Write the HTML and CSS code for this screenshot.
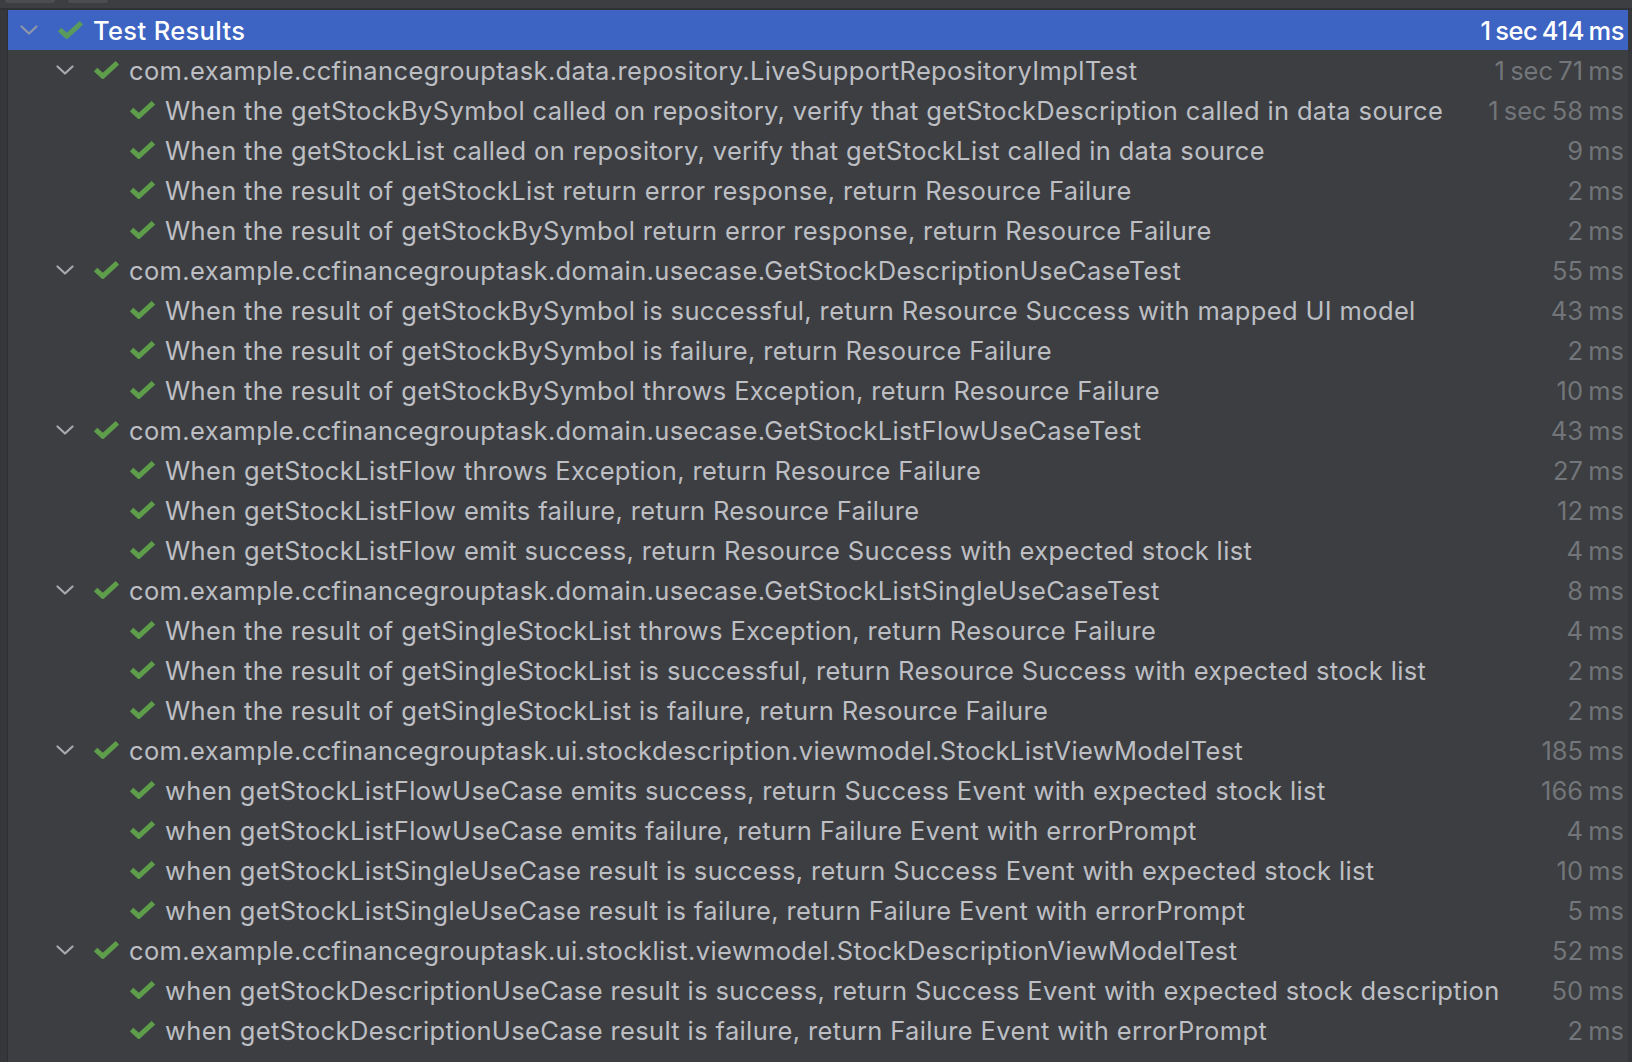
FILE: index.html
```html
<!DOCTYPE html>
<html>
<head>
<meta charset="utf-8">
<link rel="stylesheet" href="styles.css">
</head>
<body>
<svg width="0" height="0" class="defs">
  <defs>
    <symbol id="chev" viewBox="0 0 18 10"><polyline points="1.5,1.5 9,8.5 16.5,1.5" fill="none" stroke="currentColor" stroke-width="2.2" stroke-linecap="round" stroke-linejoin="round"/></symbol>
    <symbol id="ok" viewBox="0 0 25 18"><polyline points="1.6,8.6 8.8,15.2 23.4,1.8" fill="none" stroke="currentColor" stroke-width="5" stroke-linejoin="miter" stroke-linecap="butt"/></symbol>
  </defs>
</svg>
<div class="window">
  <div class="topbar"><span class="tab t1"></span><span class="tab t2"></span></div>
  <div class="main">
    <div class="gutter"></div>
    <div class="tree">
      <div class="row sel l0"><svg class="chev"><use href="#chev"/></svg><svg class="ok"><use href="#ok"/></svg><span class="name">Test Results</span><span class="time">1 sec 414 ms</span></div>

      <div class="row l1"><svg class="chev"><use href="#chev"/></svg><svg class="ok"><use href="#ok"/></svg><span class="name">com.example.ccfinancegrouptask.data.repository.LiveSupportRepositoryImplTest</span><span class="time">1 sec 71 ms</span></div>
      <div class="row l2"><span class="chev"></span><svg class="ok"><use href="#ok"/></svg><span class="name">When the getStockBySymbol called on repository, verify that getStockDescription called in data source</span><span class="time">1 sec 58 ms</span></div>
      <div class="row l2"><span class="chev"></span><svg class="ok"><use href="#ok"/></svg><span class="name">When the getStockList called on repository, verify that getStockList called in data source</span><span class="time">9 ms</span></div>
      <div class="row l2"><span class="chev"></span><svg class="ok"><use href="#ok"/></svg><span class="name">When the result of getStockList return error response, return Resource Failure</span><span class="time">2 ms</span></div>
      <div class="row l2"><span class="chev"></span><svg class="ok"><use href="#ok"/></svg><span class="name">When the result of getStockBySymbol return error response, return Resource Failure</span><span class="time">2 ms</span></div>

      <div class="row l1"><svg class="chev"><use href="#chev"/></svg><svg class="ok"><use href="#ok"/></svg><span class="name">com.example.ccfinancegrouptask.domain.usecase.GetStockDescriptionUseCaseTest</span><span class="time">55 ms</span></div>
      <div class="row l2"><span class="chev"></span><svg class="ok"><use href="#ok"/></svg><span class="name">When the result of getStockBySymbol is successful, return Resource Success with mapped UI model</span><span class="time">43 ms</span></div>
      <div class="row l2"><span class="chev"></span><svg class="ok"><use href="#ok"/></svg><span class="name">When the result of getStockBySymbol is failure, return Resource Failure</span><span class="time">2 ms</span></div>
      <div class="row l2"><span class="chev"></span><svg class="ok"><use href="#ok"/></svg><span class="name">When the result of getStockBySymbol throws Exception, return Resource Failure</span><span class="time">10 ms</span></div>

      <div class="row l1"><svg class="chev"><use href="#chev"/></svg><svg class="ok"><use href="#ok"/></svg><span class="name">com.example.ccfinancegrouptask.domain.usecase.GetStockListFlowUseCaseTest</span><span class="time">43 ms</span></div>
      <div class="row l2"><span class="chev"></span><svg class="ok"><use href="#ok"/></svg><span class="name">When getStockListFlow throws Exception, return Resource Failure</span><span class="time">27 ms</span></div>
      <div class="row l2"><span class="chev"></span><svg class="ok"><use href="#ok"/></svg><span class="name">When getStockListFlow emits failure, return Resource Failure</span><span class="time">12 ms</span></div>
      <div class="row l2"><span class="chev"></span><svg class="ok"><use href="#ok"/></svg><span class="name">When getStockListFlow emit success, return Resource Success with expected stock list</span><span class="time">4 ms</span></div>

      <div class="row l1"><svg class="chev"><use href="#chev"/></svg><svg class="ok"><use href="#ok"/></svg><span class="name">com.example.ccfinancegrouptask.domain.usecase.GetStockListSingleUseCaseTest</span><span class="time">8 ms</span></div>
      <div class="row l2"><span class="chev"></span><svg class="ok"><use href="#ok"/></svg><span class="name">When the result of getSingleStockList throws Exception, return Resource Failure</span><span class="time">4 ms</span></div>
      <div class="row l2"><span class="chev"></span><svg class="ok"><use href="#ok"/></svg><span class="name">When the result of getSingleStockList is successful, return Resource Success with expected stock list</span><span class="time">2 ms</span></div>
      <div class="row l2"><span class="chev"></span><svg class="ok"><use href="#ok"/></svg><span class="name">When the result of getSingleStockList is failure, return Resource Failure</span><span class="time">2 ms</span></div>

      <div class="row l1"><svg class="chev"><use href="#chev"/></svg><svg class="ok"><use href="#ok"/></svg><span class="name">com.example.ccfinancegrouptask.ui.stockdescription.viewmodel.StockListViewModelTest</span><span class="time">185 ms</span></div>
      <div class="row l2"><span class="chev"></span><svg class="ok"><use href="#ok"/></svg><span class="name">when getStockListFlowUseCase emits success, return Success Event with expected stock list</span><span class="time">166 ms</span></div>
      <div class="row l2"><span class="chev"></span><svg class="ok"><use href="#ok"/></svg><span class="name">when getStockListFlowUseCase emits failure, return Failure Event with errorPrompt</span><span class="time">4 ms</span></div>
      <div class="row l2"><span class="chev"></span><svg class="ok"><use href="#ok"/></svg><span class="name">when getStockListSingleUseCase result is success, return Success Event with expected stock list</span><span class="time">10 ms</span></div>
      <div class="row l2"><span class="chev"></span><svg class="ok"><use href="#ok"/></svg><span class="name">when getStockListSingleUseCase result is failure, return Failure Event with errorPrompt</span><span class="time">5 ms</span></div>

      <div class="row l1"><svg class="chev"><use href="#chev"/></svg><svg class="ok"><use href="#ok"/></svg><span class="name">com.example.ccfinancegrouptask.ui.stocklist.viewmodel.StockDescriptionViewModelTest</span><span class="time">52 ms</span></div>
      <div class="row l2"><span class="chev"></span><svg class="ok"><use href="#ok"/></svg><span class="name">when getStockDescriptionUseCase result is success, return Success Event with expected stock description</span><span class="time">50 ms</span></div>
      <div class="row l2"><span class="chev"></span><svg class="ok"><use href="#ok"/></svg><span class="name">when getStockDescriptionUseCase result is failure, return Failure Event with errorPrompt</span><span class="time">2 ms</span></div>
    </div>
    <div class="rgutter"></div>
  </div>
</div>
</body>
</html>
```

FILE: styles.css
```css
html, body {
  margin: 0;
  padding: 0;
  background: #3c3e41;
}
.defs {
  position: absolute;
  width: 0;
  height: 0;
}
.window {
  width: 1632px;
  height: 1062px;
  display: flex;
  flex-direction: column;
  overflow: hidden;
  font-family: Inter, "Noto Sans", "Liberation Sans", sans-serif;
}
.topbar {
  height: 8px;
  flex: none;
  background: #3c3e41;
  border-bottom: 2px solid #2f3134;
  display: flex;
  align-items: flex-start;
  padding-left: 5px;
  gap: 13px;
}
.tab {
  display: block;
  height: 3px;
  background: #4b4d51;
  border-radius: 0 0 4px 4px;
}
.t1 { width: 50px; }
.t2 { width: 40px; }
.main {
  flex: 1;
  display: flex;
}
.gutter {
  width: 7px;
  flex: none;
  background: #35373a;
  border-right: 1px solid #2d2f32;
}
.rgutter {
  width: 4px;
  flex: none;
  background: #35373a;
}
.tree {
  flex: 1;
  display: flex;
  flex-direction: column;
  min-width: 0;
}
.row {
  height: 40px;
  flex: none;
  display: flex;
  align-items: center;
  padding-right: 4px;
  font-size: 25.5px;
  letter-spacing: 0.36px;
  color: #bdbfc4;
  white-space: nowrap;
}
.row.l0 { padding-left: 12px; }
.row.l1 { padding-left: 48px; }
.row.l2 { padding-left: 84px; }
.chev {
  width: 18px;
  height: 10px;
  flex: none;
  color: #a6a9ae;
  margin-right: 20px;
}
.ok {
  width: 25px;
  height: 18px;
  flex: none;
  color: #5e9e4b;
  margin-right: 10px;
}
.name {
  flex: 1;
  min-width: 0;
  overflow: hidden;
}
.time {
  flex: none;
  color: #727579;
  word-spacing: -2px;
  letter-spacing: 0;
  margin-left: 20px;
}
.sel {
  background: #3d64c2;
  color: #ffffff;
}
.sel .name {
  font-weight: 500;
}
.sel .time {
  color: #ffffff;
  font-weight: 500;
  letter-spacing: -0.4px;
}
.sel .chev {
  color: #8f96aa;
}
.sel .ok {
  color: #5a9a5c;
}
```
